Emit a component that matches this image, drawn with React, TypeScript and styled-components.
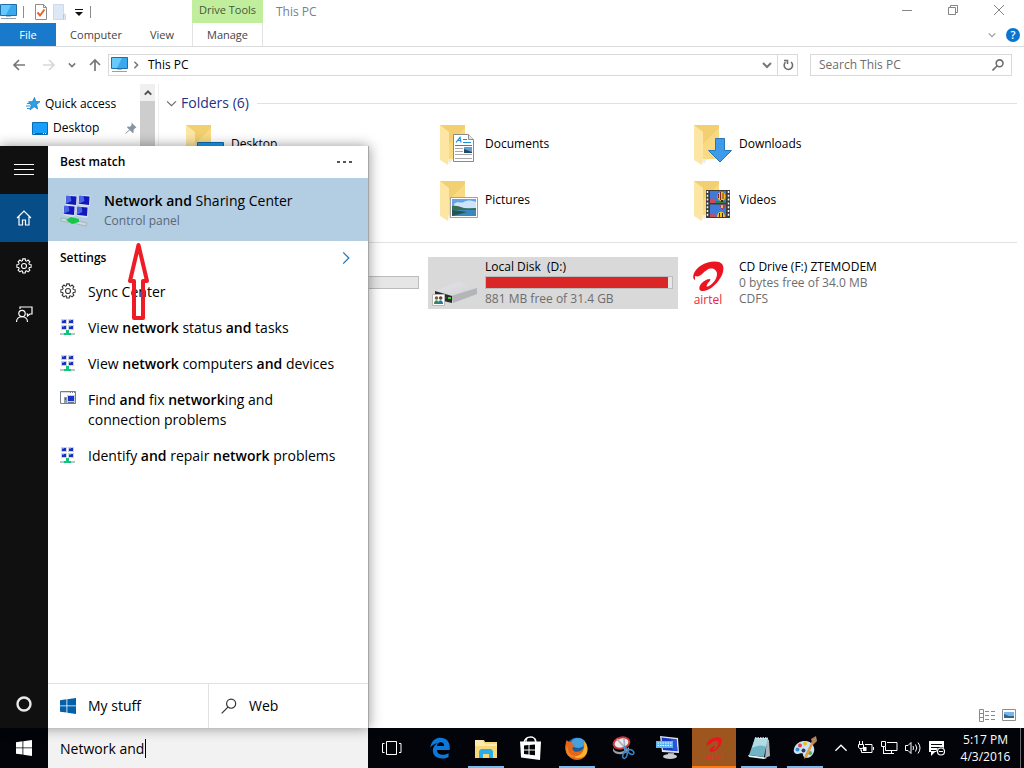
import React from "react";
import styled, { createGlobalStyle, css } from "styled-components";

const GlobalStyle = createGlobalStyle`
  *, *::before, *::after { box-sizing: border-box; }
  body {
    margin: 0;
    background: #fff;
    color: #000;
    font-family: "Open Sans", "Noto Sans", sans-serif;
    font-size: 12px;
    line-height: 16px;
  }
  button, input {
    font: inherit;
    color: inherit;
    background: none;
    border: 0;
    padding: 0;
    margin: 0;
    outline: 0;
  }
  a { color: inherit; text-decoration: none; }
  svg { display: block; flex: none; }
`;

const Screen = styled.div`
  position: relative;
  display: flex;
  flex-direction: column;
  min-height: 100vh;
  overflow: hidden;
`;

/* ---------- Explorer window ---------- */

const Explorer = styled.main`
  flex: 1;
  display: flex;
  flex-direction: column;
`;

const TitleBar = styled.header`
  display: flex;
  height: 23px;
`;

const QuickTools = styled.div`
  flex: none;
  display: flex;
  align-items: center;
  gap: 6px;
  width: 192px;
`;

const ToolDivider = styled.span`
  width: 1px;
  height: 12px;
  margin: 0 5px 0 0;
  background: #8c8c8c;
`;

const ToolButton = styled.button`
  display: flex;
`;

const ContextLabel = styled.div`
  flex: none;
  width: 71px;
  padding-top: 2px;
  background: #c1ee9d;
  color: #41593b;
  font-size: 11px;
  text-align: center;
`;

const WindowTitle = styled.h1`
  flex: 1;
  margin: 0;
  padding: 4px 0 0 13px;
  color: #76808f;
  font-size: 12px;
  font-weight: 400;
`;

const WindowButtons = styled.div`
  display: flex;
  align-items: center;
  height: 20px;
  padding-right: 2px;
`;

const WindowButton = styled.button`
  display: flex;
  align-items: center;
  justify-content: center;
  width: 46px;
  height: 20px;
  color: #858585;
`;

const RibbonTabs = styled.nav`
  display: flex;
  height: 24px;
  border-bottom: 1px solid #dadbdc;
`;

const RibbonTab = styled.button<{ $width: number; $kind?: "file" | "context" }>`
  width: ${(p) => p.$width}px;
  height: 23px;
  color: #444;
  font-size: 11px;
  ${(p) => p.$kind === "file" && css`
    background: #1979ca;
    color: #fff;
  `}
  ${(p) => p.$kind === "context" && css`
    margin-left: 4px;
    border: solid #e3e3e3;
    border-width: 0 1px;
  `}
`;

const RibbonEnd = styled.div`
  display: flex;
  align-items: center;
  gap: 10px;
  margin-left: auto;
  padding-right: 4px;
`;

const NavRow = styled.div`
  display: flex;
  align-items: center;
  height: 37px;
  padding: 0 12px 2px;
`;

const NavArrows = styled.div`
  display: flex;
  align-items: center;
  width: 96px;
`;

const NavButton = styled.button<{ $width: number }>`
  display: flex;
  width: ${(p) => p.$width}px;
`;

const AddressBar = styled.div`
  flex: 1;
  display: flex;
  align-items: center;
  height: 22px;
  border: 1px solid #d9d9d9;
  padding-left: 2px;
`;

const CrumbArrow = styled.span`
  padding-left: 4px;
`;

const Crumb = styled.a`
  flex: 1;
  padding-left: 8px;
`;

const AddressButton = styled.button<{ $divided?: boolean }>`
  display: flex;
  align-items: center;
  justify-content: center;
  width: 20px;
  height: 20px;
  border-left: ${(p) => (p.$divided ? "1px solid #d9d9d9" : "0")};
`;

const SearchField = styled.label`
  display: flex;
  align-items: center;
  width: 202px;
  height: 22px;
  margin-left: 12px;
  padding: 0 7px 0 8px;
  border: 1px solid #d9d9d9;
`;

const SearchInput = styled.input`
  flex: 1;
  min-width: 0;
  &::placeholder { color: #6d6d6d; opacity: 1; }
`;

const Body = styled.div`
  flex: 1;
  display: flex;
`;

const Sidebar = styled.aside`
  display: flex;
  width: 159px;
  height: 420px;
  border-right: 1px solid #f0f0f0;
`;

const SideList = styled.nav`
  width: 140px;
  padding: 8px 3px 0 26px;
`;

const SideLink = styled.a<{ $nested?: boolean }>`
  display: flex;
  align-items: center;
  gap: 5px;
  height: 24px;
  padding-left: ${(p) => (p.$nested ? 6 : 0)}px;
  & > :nth-child(3) { margin-left: auto; }
`;

const Scrollbar = styled.div`
  width: 15px;
  background: #cdcdcd;
`;

const ScrollButton = styled.button`
  display: flex;
  align-items: center;
  justify-content: center;
  width: 15px;
  height: 17px;
  background: #f0f0f0;
`;

const Content = styled.section`
  flex: 1;
  padding: 9px 7px 0 7px;
`;

const GroupHeading = styled.h2`
  display: flex;
  align-items: center;
  gap: 4px;
  height: 20px;
  margin: 0;
  color: #1e3287;
  font-size: 14px;
  font-weight: 400;
  &::after {
    content: "";
    flex: 1;
    height: 1px;
    margin-left: 4px;
    background: #e2e2e2;
  }
`;

const TileGrid = styled.div`
  display: grid;
  grid-template-columns: repeat(auto-fill, 250px);
  gap: 4px;
  padding: 5px 0 0 8px;
`;

const Tile = styled.a<{ $selected?: boolean }>`
  display: flex;
  align-items: center;
  height: 52px;
  padding-right: 5px;
  background: ${(p) => (p.$selected ? "#d9d9d9" : "transparent")};
`;

const TileIcon = styled.span`
  flex: none;
  display: flex;
  width: 57px;
  padding: 2px 0 0 4px;
`;

const TileText = styled.span`
  flex: 1;
  display: flex;
  flex-direction: column;
`;

const TileDetail = styled.span`
  color: #6d6d6d;
`;

const CapacityBar = styled.span`
  height: 13px;
  margin: 1px 0 2px;
  border: 1px solid #bcbcbc;
  background: #e6e6e6;
`;

const CapacityFill = styled.span`
  display: block;
  height: 100%;
  background: #da2626;
`;

const DriveGroup = styled.div`
  margin-top: 6px;
`;

const StatusBar = styled.footer`
  display: flex;
  align-items: center;
  justify-content: flex-end;
  gap: 7px;
  height: 24px;
  padding: 0 8px 2px 0;
`;

/* ---------- Search menu ---------- */

const SearchMenu = styled.aside`
  position: absolute;
  top: 146px;
  bottom: 40px;
  left: 0;
  display: flex;
  width: 369px;
  border-right: 1px solid #a6a6a6;
  box-shadow: 0 0 12px rgba(0, 0, 0, 0.42);
`;

const Rail = styled.nav`
  display: flex;
  flex-direction: column;
  width: 48px;
  background: #101010;
  color: #fff;
`;

const RailButton = styled.button<{ $active?: boolean; $last?: boolean }>`
  display: flex;
  align-items: center;
  justify-content: center;
  height: 48px;
  background: ${(p) => (p.$active ? "#074d87" : "transparent")};
  margin-top: ${(p) => (p.$last ? "auto" : "0")};
`;

const Results = styled.div`
  flex: 1;
  display: flex;
  flex-direction: column;
  background: #fff;
  font-size: 14px;
  line-height: 20px;
`;

const ResultsHeading = styled.h2`
  display: flex;
  align-items: center;
  justify-content: space-between;
  height: 32px;
  margin: 0;
  padding: 0 15px 0 12px;
  font-size: 12px;
  font-weight: 600;
`;

const BestMatch = styled.a`
  display: flex;
  align-items: center;
  gap: 12px;
  height: 63px;
  margin-bottom: 1px;
  padding: 3px 12px 0;
  background: #b3cde3;
`;

const BestMatchKind = styled.span`
  display: block;
  color: #5a6773;
  font-size: 12px;
`;

const Strong = styled.b`
  font-weight: 600;
`;

const ResultItem = styled.a`
  display: flex;
  gap: 12px;
  padding: 8px 24px 8px 12px;
`;

const ItemIcon = styled.span`
  flex: none;
  width: 16px;
  padding-top: 1px;
`;

const Scopes = styled.div`
  display: grid;
  grid-template-columns: 161px 1fr;
  height: 45px;
  margin-top: auto;
  border-top: 1px solid #e2e2e2;
`;

const Scope = styled.button`
  display: flex;
  align-items: center;
  gap: 12px;
  padding-left: 12px;
  &:first-child { border-right: 1px solid #e2e2e2; }
`;

const Pointer = styled.svg`
  position: absolute;
  top: 242px;
  left: 126px;
`;

/* ---------- Taskbar ---------- */

const Taskbar = styled.footer`
  display: flex;
  height: 40px;
  background: #02040a;
  color: #fff;
`;

const TaskButton = styled.button<{ $width: number }>`
  flex: none;
  display: flex;
  align-items: center;
  justify-content: center;
  width: ${(p) => p.$width}px;
  height: 40px;
`;

const TaskSearch = styled.label`
  flex: none;
  display: flex;
  align-items: center;
  width: 320px;
  padding-left: 12px;
  background: #f2f2f2;
  color: #000;
  font-size: 14px;
`;

const TaskSearchInput = styled.input`
  field-sizing: content;
  height: 20px;
  margin-right: 1px;
  caret-color: transparent;
`;

const Caret = styled.span`
  width: 1px;
  height: 19px;
  background: #000;
`;

const Apps = styled.div`
  flex: none;
  display: flex;
  justify-content: space-between;
  width: 409px;
  margin-left: 2px;
`;

const AppButton = styled.button<{ $state?: "open" | "alert" }>`
  display: flex;
  flex-direction: column;
  align-items: center;
  justify-content: center;
  width: 44px;
  height: 40px;
  position: relative;
  background: ${(p) => (p.$state === "alert" ? "#9d561d" : "transparent")};
  &::after {
    content: "";
    position: absolute;
    bottom: 0;
    width: ${(p) => (p.$state === "alert" ? 44 : 36)}px;
    height: 2px;
    background: ${(p) => (p.$state === "alert" ? "#ff7a0a" : p.$state === "open" ? "#76b9ed" : "transparent")};
  }
`;

const Tray = styled.div`
  display: flex;
  align-items: center;
  margin-left: auto;
`;

const Clock = styled.button`
  width: 71px;
  height: 36px;
  padding-left: 2px;
  line-height: 17px;
  text-align: center;
`;

const ShowDesktop = styled.button`
  width: 4px;
  height: 40px;
  border-left: 1px solid #6a6c70;
`;

/* ---------- Drawings ---------- */

const MonitorIcon = () => (
  <svg width="17" height="16" viewBox="0 0 17 16">
    <path d="M.5.5h16v11H.5z" fill="#3aa9ee" stroke="#206fa8" />
    <path d="M1 1h10L6 11H1z" fill="#67c8fa" />
    <path d="M6 12h5v1H6z" fill="#b0bcc6" />
    <path d="M1 14h15v1H1z" fill="#8fa3b2" />
  </svg>
);

const DesktopIcon = () => (
  <svg width="16" height="13" viewBox="0 0 16 13">
    <path d="M.5.5h15v12H.5z" fill="#16a0fb" stroke="#0a6cb3" />
    <path d="M1 11h14v1H1z" fill="#0b63a5" />
    <path d="M1.500 11.500h1M11 11.500h1M13 11.500h1" stroke="#fff" />
  </svg>
);

const CheckDocIcon = () => (
  <svg width="12" height="16" viewBox="0 0 12 16">
    <path d="M.5.500h8l3 3v12H.5z" fill="#fff" stroke="#8d8d8d" />
    <path d="M8.500.5v3h3" fill="none" stroke="#8d8d8d" />
    <path d="m2.500 8.500 2.500 3 4.500-6" fill="none" stroke="#e8622a" strokeWidth="2" />
  </svg>
);

const NewFolderIcon = () => (
  <svg width="13" height="16" viewBox="0 0 13 16">
    <path d="M.5.500h10v9l2 1v5H.5z" fill="#dde7f6" stroke="#ced9ea" />
    <path d="M10.500 10v5" stroke="#b9c8df" />
  </svg>
);

const Chevron = ({ dir, size = 8, color = "#777", weight = 1.5 }: { dir: "up" | "down" | "right"; size?: number; color?: string; weight?: number }) => {
  const d = { up: "M1 7 5 3l4 4", down: "m1 3 4 4 4-4", right: "m3 1 4 4-4 4" }[dir];
  return (
    <svg width={size} height={size} viewBox="0 0 10 10">
      <path d={d} fill="none" stroke={color} strokeWidth={(weight * 10) / size} />
    </svg>
  );
};

const Arrow = ({ rotate = 0, color = "#777" }: { rotate?: number; color?: string }) => (
  <svg width="14" height="14" viewBox="0 0 14 14">
    <path d="M13 7H2M7 2 2 7l5 5" transform={`rotate(${rotate} 7 7)`} fill="none" stroke={color} strokeWidth="1.700" />
  </svg>
);

const MagnifierIcon = ({ size = 12, color = "#6d6d6d", weight = 1.6 }: { size?: number; color?: string; weight?: number }) => (
  <svg width={size} height={size} viewBox="0 0 12 12">
    <circle cx="7.600" cy="4.300" r="3.400" fill="none" stroke={color} strokeWidth={weight} />
    <path d="M5.200 6.800.5 11.500" stroke={color} strokeWidth={weight} />
  </svg>
);

const StarIcon = () => (
  <svg width="14" height="14" viewBox="0 0 14 14">
    <path d="m8.500.5 1.300 4 4.200.2-3.400 2.500 1 4.800-3.500-2.300L4 13l1.200-4.800-2.700-3.400 4-.2z" fill="#2ba0ec" stroke="#1674b5" strokeWidth=".7" />
    <path d="M1 6.500h4M0 9h4M1 11.500h3" stroke="#2a93da" />
  </svg>
);

const PinIcon = () => (
  <svg width="12" height="12" viewBox="0 0 12 12">
    <path d="m6.500.5 5 5-1.200.6-1.800 1.800.2 2.600-1 .5L2 5.500l.6-1 2.400.2 1.600-1.800z" fill="#8795a1" />
    <path d="m5 7.500-4.500 4" stroke="#8795a1" />
  </svg>
);

const Folder = ({ children }: { children?: React.ReactNode }) => (
  <svg width="46" height="42" viewBox="0 0 46 42">
    <path d="M8 1h25v34H12z" fill="#f9da83" />
    <path d="M8 1h25v3L17 20z" fill="#f2cf70" />
    <path d="m8 1 9 7v27l-1 6-8-5z" fill="#fde6a3" />
    <path d="m16 35 5 0-3 5z" fill="#ececec" />
    {children}
  </svg>
);

const DocumentsArt = () => (
  <g>
    <path d="M21.500 10.500h15l5 5v22h-20z" fill="#fff" stroke="#8a8a8a" />
    <path d="M36.500 10.500v5h5" fill="#e8e8e8" stroke="#8a8a8a" />
    <path d="m24 18.500 4-5 1 5M25 16.500h4" fill="none" stroke="#1b8fd6" strokeWidth="1.200" />
    <path d="M31 15.500h4M31 18.500h8M23 21.500h17" stroke="#1b8fd6" />
    <path d="M23 24.500h8M23 27.500h8M23 30.500h17M23 34.500h17" stroke="#a8a8a8" />
    <path d="M32 23h8v6h-8z" fill="#5ba0dd" />
    <path d="m32 25 8 3v1h-8z" fill="#234c58" />
  </g>
);

const PicturesArt = () => (
  <g>
    <path d="M18.500 17.500h27v20h-27z" fill="#fff" stroke="#a0a0a0" />
    <path d="M20 19h24v17H20z" fill="#66a4ea" />
    <path d="M22 24c4-4 7 0 10-2s7-2 12 0v6H22z" fill="#cfe4fa" />
    <path d="M20 26c5-1 8 1 12 2s8 0 12 0v2H20z" fill="#3b6e50" />
    <path d="M20 30h24v6H20z" fill="#3b86bd" />
    <path d="m20 30 15 2-7 2-8 2z" fill="#245450" />
  </g>
);

const DownloadsArt = () => (
  <path d="M29.500 14.500h9v12h7L34 38 22.500 26.500h7z" fill="#3e9be9" stroke="#2479bd" />
);

const VideosArt = () => (
  <g>
    <path d="M20 10h24v28H20z" fill="#3c3c3c" />
    <path d="M21.500 11v26M42.500 11v26" stroke="#fff" strokeWidth="1.500" strokeDasharray="2 1.800" />
    <path d="M24 11h16v12H24zM24 24.500h16V37H24z" fill="#3f7ad8" />
    <path d="M24 19c2-2 4 0 6 1v3h-6zM24 35c2-4 4-1 7 2h-7z" fill="#c94b5c" />
    <path d="M29 21h11v2H29z" fill="#2d8a3c" />
    <ellipse cx="35.500" cy="16.500" rx="4" ry="4.500" fill="#f2c21d" />
    <path d="M34.500 12v8M37 13v6M32.500 14v4" stroke="#7e2c24" />
    <path d="M35 20h2v2h-2z" fill="#332417" />
    <path d="M33 24.500h7l-3 5h-1z" fill="#b83a5e" />
    <path d="M35 25h2v3h-2z" fill="#eac230" />
    <path d="M31 37c0-7 8-7 8 0z" fill="#f2c21d" />
    <path d="M33.500 33v4M36.500 33v4" stroke="#3a2320" />
  </g>
);

const DriveIcon = () => (
  <svg width="48" height="48" viewBox="0 0 48 48">
    <defs>
      <linearGradient id="drive-top" x1="0" y1="0" x2="1" y2="1">
        <stop offset="0" stopColor="#e4e5e8" />
        <stop offset="1" stopColor="#cfd0d4" />
      </linearGradient>
    </defs>
    <path d="m3 31 24-9 18 6-26 9z" fill="url(#drive-top)" />
    <path d="m19 36 26-8v6L21 43z" fill="#b3b5b9" />
    <path d="m3 31 17 5v7L3 39z" fill="#2b2b2d" />
    <path d="m9 36 6 2" stroke="#4c4c50" />
    <path d="M16 37h3v2h-3z" fill="#45d235" />
    <path d="M.5 34.500h12v11H.5z" fill="#fff" stroke="#b8b8b8" />
    <circle cx="4.500" cy="38" r="1.800" fill="#8a5a3c" />
    <circle cx="8.700" cy="38" r="1.800" fill="#5e4632" />
    <path d="M2 44c0-5 5-5 5 0z" fill="#3f8554" />
    <path d="M6 44c0-5 5-5 5 0z" fill="#2e7898" />
  </svg>
);

const AirtelMark = ({ size }: { size: number }) => (
  <svg width={size} height={size} viewBox="0 0 32 32">
    <path d="M3 19C-1 17 2 9 9 4.500 16 0 27-1 30 3c3 4 1 11-3 16-4 6-10 10-15 11-5 .8-6-3-3-7 2-3 6-5 9-5 1 1 0 2-2 4-2 3-2 4 0 3.500 5-2 9-8 9-12.500 0-5-6-7-10-4-5 3-7 8-12 6z" fill="#ea1520" />
  </svg>
);

const AirtelTile = styled.span<{ $large?: boolean }>`
  display: flex;
  flex-direction: column;
  align-items: center;
  width: ${(p) => (p.$large ? 32 : 18)}px;
  margin-left: ${(p) => (p.$large ? 6 : 0)}px;
  color: #e92a35;
  font-size: ${(p) => (p.$large ? 12 : 7)}px;
  line-height: ${(p) => (p.$large ? 14 : 7)}px;
`;

const PcScreens = () => (
  <svg width="32" height="32" viewBox="0 0 32 32">
    {[[5, 0], [18, 0], [3, 10], [16, 11]].map(([x, y]) => (
      <g key={`${x}-${y}`} transform={`translate(${x} ${y})`}>
        <path d="M1 0 12.500.5 12 11l-3 1-8-2-1-.5z" fill="#d6e0ee" />
        <path d="m1.500.8 10 .7-.5 8.500L.8 8.800z" fill="#1117b8" />
        <path d="m1.500.8 4 .3 1 5L.8 8.800z" fill="#4a66e2" />
      </g>
    ))}
    <path d="m1 23 12 2 14 3-1 3-13-3-12-2z" fill="#cfdcdd" stroke="#8da1a4" strokeWidth=".6" />
    <path d="m6 25 5-3 8 2 0 3-7 2z" fill="#16c74a" />
  </svg>
);

const SmallPcs = () => (
  <svg width="16" height="17" viewBox="0 0 16 17">
    {[[1, 0], [8, 0], [1, 6], [8, 6]].map(([x, y]) => (
      <g key={`${x}-${y}`} transform={`translate(${x} ${y})`}>
        <path d="M0 0h6v5H0z" fill="#c9d2dd" />
        <path d="M1 1h4v3H1z" fill="#1c2dc0" />
        <path d="M1 1h2v1H1z" fill="#6484e6" />
      </g>
    ))}
    <path d="M0 14h15v2H0z" fill="#b8c6c6" />
    <path d="M6 11h3v3h2v2H4v-2h2z" fill="#12c47a" />
  </svg>
);

const TroubleshootIcon = () => (
  <svg width="16" height="14" viewBox="0 0 16 14">
    <path d="M.5.500h15v12H.5z" fill="#fff" stroke="#75808c" />
    <path d="M1 1.500h9" stroke="#d6dbe0" />
    <path d="M10 1.500h5" stroke="#75808c" strokeDasharray="1 1" />
    <path d="M7 4h8v8H7z" fill="#c6cfda" />
    <path d="M8 5h6v5H8z" fill="#1a34c8" />
    <path d="M4 6h3v6H4z" fill="#8fa0aa" />
    <path d="M5 7h1v2H5z" fill="#15834f" />
    <path d="M8 11h6v1H8z" fill="#687784" />
  </svg>
);

const GearIcon = ({ color = "currentColor" }: { color?: string }) => (
  <svg width="16" height="16" viewBox="0 0 18 18" fill="none" stroke={color} strokeWidth="1.200">
    <path d="M7.600 1h2.800l.3 2 1.200.5L13.600 2.300l2 2-1.100 1.700.5 1.200 2 .4v2.800l-2 .3-.5 1.200 1.100 1.700-2 2-1.700-1.200-1.200.5-.3 2H7.600l-.3-2-1.200-.5-1.700 1.200-2-2 1.100-1.700-.5-1.200-2-.3V7.600l2-.4.5-1.200-1.100-1.700 2-2 1.700 1.200 1.200-.5z" />
    <circle cx="9" cy="9" r="2.800" />
  </svg>
);

const HomeIcon = () => (
  <svg width="16" height="16" viewBox="0 0 16 16" fill="none" stroke="currentColor" strokeWidth="1.200">
    <path d="m1 8 7-7 7 7M3 6.500V15h3.500v-5h3v5H13V6.500" />
  </svg>
);

const FeedbackIcon = () => (
  <svg width="18" height="17" viewBox="0 0 18 17" fill="none" stroke="currentColor" strokeWidth="1.200">
    <circle cx="7" cy="7.500" r="3.200" />
    <path d="M1.500 16c0-7 11-7 11 0M5 3V1h12v7h-2l-2.500 2V8h-1" />
  </svg>
);

const WindowsIcon = ({ color }: { color: string }) => (
  <svg width="16" height="16" viewBox="0 0 16 16" fill={color}>
    <path d="m0 2.200 6.500-.9v6.200H0zM7.300 1.200 16 0v7.500H7.300zM0 8.300h6.500v6.300L0 13.700zM7.300 8.300H16V16l-8.700-1.300z" />
  </svg>
);

const TaskViewIcon = () => (
  <svg width="20" height="16" viewBox="0 0 20 16" fill="none" stroke="#fff">
    <path d="M4.500 1.500h10v13h-10zM2.500 3.500h-2v9h2M17 3.500h2v9h-2" />
  </svg>
);

const EdgeIcon = () => (
  <svg width="20" height="22" viewBox="0 0 21 22">
    <path d="M.3 10.500C1.500 3 6 .3 11 .3c6 0 9.500 4 9.700 9.700v3H7.200c.3 4 3.500 5 6.300 5 2.500 0 4.500-.7 6-1.600v4c-2 1.100-4.500 1.600-7 1.600C6.500 22 3 18.500 3 14c0-4 2-6.500 5-8-3.500.5-6 2-7.700 4.500zM7.300 9h7.500c0-2.500-1-4-3.600-4C9 5 7.600 6.500 7.300 9z" fill="#0c79d8" />
  </svg>
);

const FilesIcon = () => (
  <svg width="22" height="19" viewBox="0 0 22 19">
    <path d="M0 1h9l1 2h12v16H0z" fill="#f8d878" />
    <path d="M0 1h7l3 4h12v2H0z" fill="#fcebae" />
    <path d="M4 19v-7l2-2h10l2 2v7h-4v-4H8v4z" fill="#2aaeea" />
  </svg>
);

const StoreIcon = () => (
  <svg width="22" height="24" viewBox="0 0 22 24">
    <path d="M6 6c-.5-7 9-7 9.500 0M4 6c2-7 12-6 12 0" fill="none" stroke="#fff" strokeWidth="1.200" />
    <path d="M0 5.500h21L20 24 1 21.500z" fill="#fff" />
    <path d="m4 9.500 4.500-.5v4.500H4zM9.500 9l5.500-.6v5H9.500zM4 14.500h4.500v4L4 18zM9.500 14.500H15v4.800l-5.500-.6z" fill="#02040a" />
  </svg>
);

const FirefoxIcon = () => (
  <svg width="23" height="23" viewBox="0 0 23 23">
    <circle cx="12" cy="11" r="10.500" fill="#1d5c9c" />
    <ellipse cx="13" cy="6" rx="7" ry="5" fill="#45a0dc" />
    <path d="M2 3c.5 1.500 2 1.500 4 2-.5 2 2 2.500 4 3 0 2-3 2-2.500 4 1 3 5 3.500 8 2 3-1.500 4-5 3-9 5 4 5 11 1 15-4 4-11 4-15 0C0 16-.5 10 .7 7 .8 5 1.200 4 2 3z" fill="#e4661a" />
    <path d="M19 4c5 5 4.500 13-1 16-4 2-8 1-10-1 6 1 13-3 11-15z" fill="#f9b52c" />
    <path d="M3 9c-1 6 3 10 8 10-4 3-10 0-10-6 0-2 1-3 2-4z" fill="#f28322" />
  </svg>
);

const SnipIcon = () => (
  <svg width="24" height="24" viewBox="0 0 24 24" fill="none">
    <path d="M2 11c1 7 12 6 16 0v3c-4 6-14 5-16 1z" fill="#9a9ea5" />
    <ellipse cx="10.500" cy="7" rx="8" ry="5.500" fill="#ececf0" stroke="#c9383d" strokeWidth="2" transform="rotate(-14 10.500 7)" />
    <path d="m6 3 10 11M13 3l1 12" stroke="#a9b3bd" strokeWidth="1.800" />
    <path d="m13 10 4 4M14 12v4" stroke="#3a85c8" strokeWidth="1.500" />
    <ellipse cx="14" cy="19" rx="2" ry="3.500" stroke="#3a85c8" strokeWidth="1.500" transform="rotate(20 14 19)" />
    <ellipse cx="20" cy="16" rx="3" ry="2" stroke="#3a85c8" strokeWidth="1.500" transform="rotate(30 20 16)" />
  </svg>
);

const KeyboardPcIcon = () => (
  <svg width="24" height="24" viewBox="0 0 24 24">
    <path d="m4 0 18 2 1 15-17-1z" fill="#dfe5ec" />
    <path d="m5.500 1.500 15 1.700 1 12L7 14z" fill="#1738c8" />
    <path d="m15 3 5.500.5 1 11.500-5-.2z" fill="#2a55dc" />
    <path d="M0 5h17v7H0z" fill="#62b4ee" />
    <path d="M1.500 7h14M1.500 9.500h14" stroke="#f0f8ff" strokeDasharray="1.500 1" />
    <path d="M12 17h6v3h-6z" fill="#9ba1aa" />
    <ellipse cx="14" cy="20.500" rx="7" ry="2.500" fill="#c9cdd2" />
  </svg>
);

const NotepadIcon = () => (
  <svg width="24" height="24" viewBox="0 0 24 24">
    <path d="m20 3 2 1 1 16-5 2z" fill="#aab4b9" />
    <path d="M8 2h13l-4 19-15-2z" fill="#6fb3c4" />
    <path d="M8 2h13l-2 9C14 8 10 10 5 12z" fill="#b2dce4" />
    <path d="M8 2h13" stroke="#e9f2f4" strokeWidth="1.500" strokeDasharray="1.500 1" />
    <path d="m1 19 15 2 4 1-3 1-15-2z" fill="#eef4f5" />
  </svg>
);

const PaintIcon = () => (
  <svg width="24" height="24" viewBox="0 0 24 24">
    <path d="M1 13C3 5 13 3 18 7s4 11-1 14c-4 2-7 0-7-2 0-3-3-1-5-1-3 0-5-2-4-5z" fill="#c9e3f3" />
    <circle cx="4.500" cy="13.500" r="2" fill="#3b8bd6" />
    <circle cx="7" cy="9.500" r="2" fill="#dc4433" />
    <circle cx="12" cy="7.500" r="2" fill="#efbd1f" />
    <circle cx="10.500" cy="14.500" r="2" fill="#203c63" />
    <circle cx="17" cy="17" r="2" fill="#58ad4f" />
    <path d="m21 6-7 15-3 2 1-4 7-14z" fill="#e29a45" />
    <path d="m18 3 5-3 1 5-4 4z" fill="#b5855d" />
  </svg>
);

const BatteryIcon = () => (
  <svg width="17" height="14" viewBox="0 0 17 14" fill="none" stroke="#fff">
    <path d="M8 3.500h7v8H4.500V9M16.500 6v3M2.500 0v3M5.500 0v3M1.500 3.500h5V6l-1 1.500h-3L1.500 6zM4 8v2" />
    <path d="M6 6h3.500v4H6z" fill="#fff" stroke="none" />
  </svg>
);

const NetworkTrayIcon = () => (
  <svg width="17" height="14" viewBox="0 0 17 14" fill="none" stroke="#fff">
    <path d="M6 1.500h10v8H4.500V6M.5.500h4v5h-4zM2.500 5v8M2 12.500h11M10.500 10v2.500" />
  </svg>
);

const VolumeIcon = () => (
  <svg width="17" height="14" viewBox="0 0 17 14" fill="none" stroke="#fff">
    <path d="M.5 4.500h2.500l3-3v11l-3-3H.5zM8 5q1 2 0 4M10.500 3.500q2.500 3.500 0 7M13 1.500q4 5.500 0 11" />
  </svg>
);

const NotificationIcon = () => (
  <svg width="17" height="17" viewBox="0 0 17 17">
    <path d="M0 1h15v8l-3 3H6l-4 4v-4H0z" fill="#fff" />
    <path d="M2 4.500h11M2 7.500h9M2 10.500h5" stroke="#02040a" />
    <circle cx="12" cy="11.500" r="4.500" fill="#02040a" />
    <circle cx="12" cy="11.500" r="3.500" fill="none" stroke="#fff" strokeWidth="1.200" />
    <path d="M10 11.500h4" stroke="#fff" />
  </svg>
);

const HelpButton = styled.button`
  width: 14px;
  height: 14px;
  border-radius: 50%;
  background: #0a74d1;
  color: #fff;
  font-size: 11px;
  font-weight: 600;
  line-height: 14px;
`;

/* ---------- Data ---------- */

const folders: { name: string; art: React.ReactNode }[] = [
  { name: "Desktop", art: <path d="M19.500 18.500h26v18h-26z" fill="#169cf3" stroke="#0a6cb3" /> },
  { name: "Documents", art: <DocumentsArt /> },
  { name: "Downloads", art: <DownloadsArt /> },
  { name: "Music", art: null },
  { name: "Pictures", art: <PicturesArt /> },
  { name: "Videos", art: <VideosArt /> },
];

const results: { icon: React.ReactNode; text: React.ReactNode }[] = [
  { icon: <GearIcon color="#333" />, text: "Sync Center" },
  { icon: <SmallPcs />, text: <>View <Strong>network</Strong> status <Strong>and</Strong> tasks</> },
  { icon: <SmallPcs />, text: <>View <Strong>network</Strong> computers <Strong>and</Strong> devices</> },
  { icon: <TroubleshootIcon />, text: <>Find <Strong>and</Strong> fix <Strong>network</Strong>ing and<br />connection problems</> },
  { icon: <SmallPcs />, text: <>Identify <Strong>and</Strong> repair <Strong>network</Strong> problems</> },
];

const apps: { name: string; icon: React.ReactNode; state?: "open" | "alert" }[] = [
  { name: "Edge", icon: <EdgeIcon /> },
  { name: "File Explorer", icon: <FilesIcon />, state: "open" },
  { name: "Store", icon: <StoreIcon /> },
  { name: "Firefox", icon: <FirefoxIcon />, state: "open" },
  { name: "Snipping Tool", icon: <SnipIcon /> },
  { name: "On-Screen Keyboard", icon: <KeyboardPcIcon /> },
  { name: "Airtel", icon: <AirtelTile><AirtelMark size={16} />airtel</AirtelTile>, state: "alert" },
  { name: "Notepad", icon: <NotepadIcon />, state: "open" },
  { name: "Paint", icon: <PaintIcon />, state: "open" },
];

export default function App() {
  return (
    <Screen>
      <GlobalStyle />
      <Explorer>
        <TitleBar>
          <QuickTools>
            <MonitorIcon />
            <ToolDivider />
            <ToolButton aria-label="Properties"><CheckDocIcon /></ToolButton>
            <ToolButton aria-label="New folder"><NewFolderIcon /></ToolButton>
            <ToolButton aria-label="Customize toolbar">
              <svg width="12" height="8" viewBox="0 0 12 8"><path d="M3 1.500h8" stroke="#111" /><path d="M3 4h8L7 8z" fill="#111" /></svg>
            </ToolButton>
            <ToolDivider />
          </QuickTools>
          <ContextLabel>Drive Tools</ContextLabel>
          <WindowTitle>This PC</WindowTitle>
          <WindowButtons>
            <WindowButton aria-label="Minimize">
              <svg width="10" height="10"><path d="M0 5.500h10" stroke="currentColor" /></svg>
            </WindowButton>
            <WindowButton aria-label="Restore">
              <svg width="10" height="10" fill="none" stroke="currentColor"><path d="M.5 2.500h7v7h-7zM2.500 2V.5h7v7H8" /></svg>
            </WindowButton>
            <WindowButton aria-label="Close">
              <svg width="10" height="10"><path d="m0 0 10 10M10 0 0 10" stroke="currentColor" /></svg>
            </WindowButton>
          </WindowButtons>
        </TitleBar>

        <RibbonTabs>
          <RibbonTab $width={56} $kind="file">File</RibbonTab>
          <RibbonTab $width={80}>Computer</RibbonTab>
          <RibbonTab $width={52}>View</RibbonTab>
          <RibbonTab $width={71} $kind="context">Manage</RibbonTab>
          <RibbonEnd>
            <Chevron dir="down" color="#9a9a9a" weight={1.2} />
            <HelpButton>?</HelpButton>
          </RibbonEnd>
        </RibbonTabs>

        <NavRow>
          <NavArrows>
            <NavButton $width={30} aria-label="Back"><Arrow /></NavButton>
            <NavButton $width={26} aria-label="Forward"><Arrow rotate={180} color="#d8d8d8" /></NavButton>
            <NavButton $width={20} aria-label="Recent"><Chevron dir="down" /></NavButton>
            <NavButton $width={20} aria-label="Up"><Arrow rotate={90} /></NavButton>
          </NavArrows>
          <AddressBar>
            <MonitorIcon />
            <CrumbArrow><Chevron dir="right" /></CrumbArrow>
            <Crumb href="#">This PC</Crumb>
            <AddressButton aria-label="Previous locations"><Chevron dir="down" size={10} weight={2} /></AddressButton>
            <AddressButton aria-label="Refresh" $divided>
              <svg width="12" height="12" viewBox="0 0 12 12" fill="none" stroke="#6d6d6d" strokeWidth="1.600">
                <path d="M9 3a4.200 4.200 0 1 1-5.500.2M2 1.500h3.500V5" />
              </svg>
            </AddressButton>
          </AddressBar>
          <SearchField>
            <SearchInput aria-label="Search This PC" placeholder="Search This PC" />
            <MagnifierIcon />
          </SearchField>
        </NavRow>

        <Body>
          <Sidebar>
            <SideList>
              <SideLink href="#"><StarIcon /><span>Quick access</span></SideLink>
              <SideLink href="#" $nested><DesktopIcon /><span>Desktop</span><PinIcon /></SideLink>
            </SideList>
            <Scrollbar>
              <ScrollButton aria-label="Scroll up"><Chevron dir="up" color="#505050" weight={2} /></ScrollButton>
            </Scrollbar>
          </Sidebar>
          <Content>
            <GroupHeading><Chevron dir="down" size={11} color="#6c6c6c" weight={1.2} />Folders (6)</GroupHeading>
            <TileGrid>
              {folders.map((f) => (
                <Tile key={f.name} href="#">
                  <TileIcon><Folder>{f.art}</Folder></TileIcon>
                  <TileText>{f.name}</TileText>
                </Tile>
              ))}
            </TileGrid>
            <DriveGroup>
              <GroupHeading />
              <TileGrid>
                <Tile href="#">
                  <TileIcon><DriveIcon /></TileIcon>
                  <TileText><CapacityBar /></TileText>
                </Tile>
                <Tile href="#" $selected>
                  <TileIcon><DriveIcon /></TileIcon>
                  <TileText>
                    <span>Local Disk &nbsp;(D:)</span>
                    <CapacityBar><CapacityFill style={{ width: "98%" }} /></CapacityBar>
                    <TileDetail>881 MB free of 31.4 GB</TileDetail>
                  </TileText>
                </Tile>
                <Tile href="#">
                  <TileIcon><AirtelTile $large><AirtelMark size={32} />airtel</AirtelTile></TileIcon>
                  <TileText>
                    <span>CD Drive (F:) ZTEMODEM</span>
                    <TileDetail>0 bytes free of 34.0 MB</TileDetail>
                    <TileDetail>CDFS</TileDetail>
                  </TileText>
                </Tile>
              </TileGrid>
            </DriveGroup>
          </Content>
        </Body>
        <StatusBar>
          <ToolButton aria-label="Details view">
            <svg width="16" height="13" viewBox="0 0 16 13" fill="none" stroke="#8a8a8a">
              <path d="M.5.500h4v12h-4zM.5 4.500h4M.5 8.500h4M6 2.500h4M12 2.500h4M6 6.500h4M12 6.500h4M6 10.500h4M12 10.500h4" />
            </svg>
          </ToolButton>
          <ToolButton aria-label="Large icons view">
            <svg width="14" height="12" viewBox="0 0 14 12">
              <path d="M.5.500h13v11H.5z" fill="#fff" stroke="#8f8f8f" />
              <path d="M2 3h10v6H2z" fill="#79b4ea" />
              <path d="m2 5 5 2h5v2H2z" fill="#2a6a86" />
            </svg>
          </ToolButton>
        </StatusBar>
      </Explorer>

      <SearchMenu>
        <Rail>
          <RailButton aria-label="Menu">
            <svg width="20" height="12"><path d="M0 .5h20M0 5.500h20M0 10.500h20" stroke="#fff" /></svg>
          </RailButton>
          <RailButton $active aria-label="Home"><HomeIcon /></RailButton>
          <RailButton aria-label="Settings"><GearIcon /></RailButton>
          <RailButton aria-label="Feedback"><FeedbackIcon /></RailButton>
          <RailButton $last aria-label="Cortana">
            <svg width="16" height="16"><circle cx="8" cy="8" r="6.500" fill="none" stroke="#e8e8e8" strokeWidth="2.400" /></svg>
          </RailButton>
        </Rail>
        <Results>
          <ResultsHeading>
            Best match
            <svg width="16" height="3"><path d="M0 1h3M6 1h3M12 1h3" stroke="#555" strokeWidth="2" /></svg>
          </ResultsHeading>
          <BestMatch href="#">
            <PcScreens />
            <span>
              <Strong>Network and</Strong> Sharing Center
              <BestMatchKind>Control panel</BestMatchKind>
            </span>
          </BestMatch>
          <ResultsHeading>
            Settings
            <Chevron dir="right" size={14} color="#2a7ab8" weight={1.3} />
          </ResultsHeading>
          {results.map((r, i) => (
            <ResultItem key={i} href="#">
              <ItemIcon>{r.icon}</ItemIcon>
              <span>{r.text}</span>
            </ResultItem>
          ))}
          <Scopes>
            <Scope><WindowsIcon color="#0460a9" />My stuff</Scope>
            <Scope><MagnifierIcon size={16} color="#333" weight={0.9} />Web</Scope>
          </Scopes>
        </Results>
      </SearchMenu>

      <Pointer width="26" height="80" viewBox="0 0 26 80" aria-hidden="true">
        <path d="M12.500 3 4 39h4v37h9V39h4z" fill="none" stroke="#ee1c24" strokeWidth="4" strokeLinejoin="round" />
      </Pointer>

      <Taskbar>
        <TaskButton $width={48} aria-label="Start"><WindowsIcon color="#fff" /></TaskButton>
        <TaskSearch>
          <TaskSearchInput aria-label="Search" defaultValue="Network and" />
          <Caret />
        </TaskSearch>
        <TaskButton $width={48} aria-label="Task view"><TaskViewIcon /></TaskButton>
        <Apps>
          {apps.map((a) => (
            <AppButton key={a.name} $state={a.state} aria-label={a.name}>{a.icon}</AppButton>
          ))}
        </Apps>
        <Tray>
          <TaskButton $width={24} aria-label="Show hidden icons"><Chevron dir="up" size={14} color="#fff" weight={1.3} /></TaskButton>
          <TaskButton $width={24} aria-label="Battery"><BatteryIcon /></TaskButton>
          <TaskButton $width={24} aria-label="Network"><NetworkTrayIcon /></TaskButton>
          <TaskButton $width={24} aria-label="Volume"><VolumeIcon /></TaskButton>
          <TaskButton $width={24} aria-label="Notifications"><NotificationIcon /></TaskButton>
          <Clock>5:17 PM<br />4/3/2016</Clock>
          <ShowDesktop aria-label="Show desktop" />
        </Tray>
      </Taskbar>
    </Screen>
  );
}
